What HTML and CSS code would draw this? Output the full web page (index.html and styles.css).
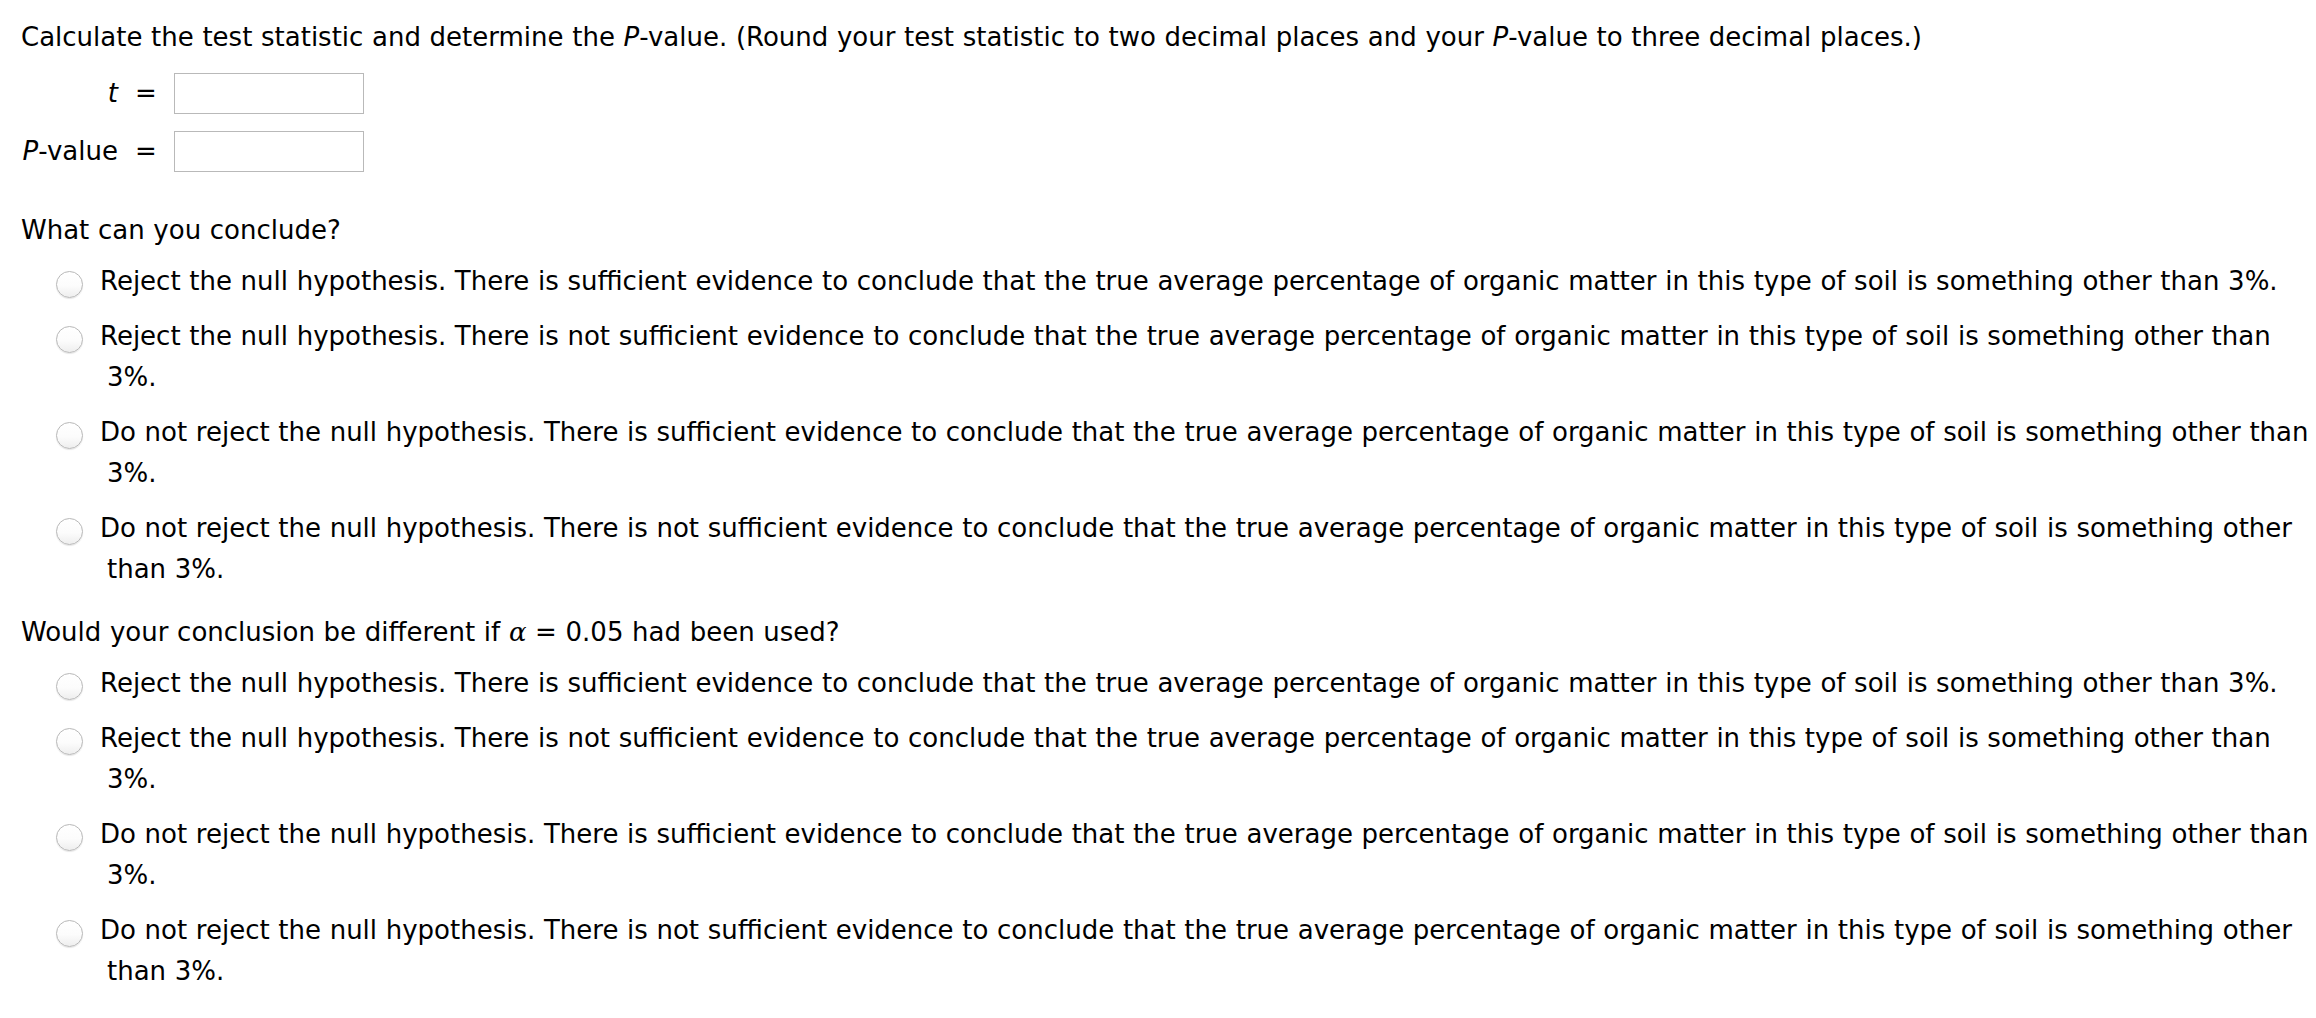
FILE: index.html
```html
<!DOCTYPE html>
<html lang="en">
<head>
<meta charset="utf-8">
<title>Hypothesis test</title>
<link rel="stylesheet" href="styles.css">
</head>
<body>
<div class="page">
  <p class="prompt">Calculate the test statistic and determine the <i>P</i>-value. (Round your test statistic to two decimal places and your <i>P</i>-value to three decimal places.)</p>
  <div class="answers">
    <label class="lbl" for="tval"><i>t</i></label><span class="eq">=</span><input class="box" id="tval" type="text">
    <label class="lbl" for="pval"><i>P</i>-value</label><span class="eq">=</span><input class="box" id="pval" type="text">
  </div>

  <p class="question">What can you conclude?</p>
  <ul class="options">
    <li class="option"><input class="radio" type="radio" name="q1"><span class="opt-text">Reject the null hypothesis. There is sufficient evidence to conclude that the true average percentage of organic matter in this type of soil is something other than 3%.</span></li>
    <li class="option"><input class="radio" type="radio" name="q1"><span class="opt-text">Reject the null hypothesis. There is not sufficient evidence to conclude that the true average percentage of organic matter in this type of soil is something other than 3%.</span></li>
    <li class="option"><input class="radio" type="radio" name="q1"><span class="opt-text">Do not reject the null hypothesis. There is sufficient evidence to conclude that the true average percentage of organic matter in this type of soil is something other than 3%.</span></li>
    <li class="option"><input class="radio" type="radio" name="q1"><span class="opt-text">Do not reject the null hypothesis. There is not sufficient evidence to conclude that the true average percentage of organic matter in this type of soil is something other than 3%.</span></li>
  </ul>

  <p class="question second">Would your conclusion be different if <i class="alpha">α</i> = 0.05 had been used?</p>
  <ul class="options">
    <li class="option"><input class="radio" type="radio" name="q2"><span class="opt-text">Reject the null hypothesis. There is sufficient evidence to conclude that the true average percentage of organic matter in this type of soil is something other than 3%.</span></li>
    <li class="option"><input class="radio" type="radio" name="q2"><span class="opt-text">Reject the null hypothesis. There is not sufficient evidence to conclude that the true average percentage of organic matter in this type of soil is something other than 3%.</span></li>
    <li class="option"><input class="radio" type="radio" name="q2"><span class="opt-text">Do not reject the null hypothesis. There is sufficient evidence to conclude that the true average percentage of organic matter in this type of soil is something other than 3%.</span></li>
    <li class="option"><input class="radio" type="radio" name="q2"><span class="opt-text">Do not reject the null hypothesis. There is not sufficient evidence to conclude that the true average percentage of organic matter in this type of soil is something other than 3%.</span></li>
  </ul>
</div>
</body>
</html>
```

FILE: styles.css
```css
html, body {
  margin: 0;
  padding: 0;
  background: #ffffff;
}

body {
  color: #000000;
  font-family: "DejaVu Sans", Verdana, sans-serif;
  font-size: 26px;
  line-height: 41px;
  word-spacing: 0.4px;
}

.page {
  padding: 17px 0 0 21px;
}

.prompt {
  margin: 0;
}

.answers {
  display: grid;
  grid-template-columns: 97px auto 190px;
  column-gap: 17px;
  row-gap: 17px;
  align-items: center;
  justify-content: start;
  margin-top: 15px;
}

.lbl {
  text-align: right;
  white-space: nowrap;
}

.eq {
  display: block;
}

.box {
  display: block;
  width: 190px;
  height: 41px;
  box-sizing: border-box;
  margin: 0;
  padding: 0 6px;
  border: 1px solid #b9b9b9;
  border-radius: 0;
  background: #ffffff;
  font: inherit;
  outline: none;
}

.question {
  margin: 38px 0 0;
}

.question.second {
  margin-top: 22px;
}

.alpha {
  font-family: "DejaVu Serif", serif;
}

.options {
  list-style: none;
  margin: 10px 0 0;
  padding: 0 0 0 35px;
  display: flex;
  flex-direction: column;
  gap: 14px;
}

.option {
  display: flex;
  align-items: flex-start;
}

.radio {
  -webkit-appearance: none;
  appearance: none;
  flex: none;
  width: 27px;
  height: 27px;
  box-sizing: border-box;
  margin: 10px 17px 0 0;
  border: 1px solid #b8b8b8;
  border-radius: 50%;
  background: linear-gradient(#ffffff 0%, #fcfcfc 55%, #eeeeee 100%);
  box-shadow: 0 1px 1px rgba(0, 0, 0, 0.1);
}

.opt-text {
  display: block;
  flex: 1;
  min-width: 0;
  padding-left: 7px;
  text-indent: -7px;
}
```
